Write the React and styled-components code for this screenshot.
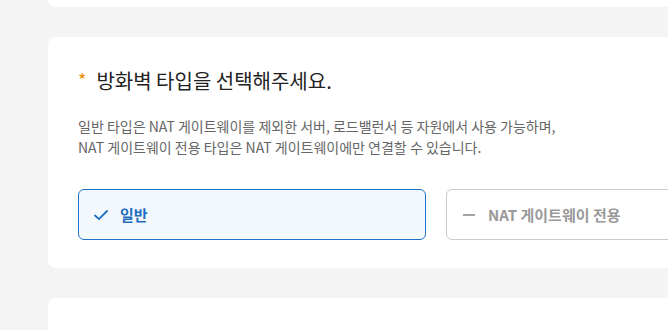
import styled, { createGlobalStyle } from "styled-components";

const GlobalStyle = createGlobalStyle`
  html, body {
    margin: 0;
    padding: 0;
    background: #f4f4f4;
    overflow: hidden;
  }
  body {
    font-family: "Noto Sans CJK KR", "Noto Sans", sans-serif;
  }
`;

const Page = styled.div`
  display: flex;
  flex-direction: column;
  gap: 30px;
  padding-left: 48px;
  margin-top: -40px;
  width: 900px;
`;

const Card = styled.section`
  background: #fff;
  border-radius: 8px;
  box-sizing: border-box;
  min-height: ${(p) => p.$height || "auto"};
  padding: ${(p) => (p.$empty ? "0" : "30px 30px 28px")};
`;

const TitleRow = styled.h2`
  display: flex;
  align-items: center;
  margin: 0;
  font-size: 20px;
  line-height: 28px;
  font-weight: 400;
  color: #222;
`;

const Required = styled.span`
  color: #f08c00;
  font-size: 18px;
  margin-right: 10px;
  position: relative;
  top: -2px;
`;

const Desc = styled.p`
  margin: 21px 0 0;
  font-size: 14px;
  line-height: 21px;
  color: #666;
`;

const Options = styled.div`
  display: flex;
  gap: 20px;
  margin-top: 31px;
`;

const Option = styled.button`
  display: flex;
  align-items: center;
  gap: 12px;
  width: 348px;
  height: 51px;
  box-sizing: border-box;
  padding: 0 15px;
  border-radius: 6px;
  font-family: inherit;
  font-size: 15px;
  font-weight: 700;
  cursor: pointer;
  border: 1px solid ${(p) => (p.$active ? "#1e74cc" : "#cccccc")};
  background: ${(p) => (p.$active ? "#f3f8fd" : "#fff")};
  color: ${(p) => (p.$active ? "#1e6fc2" : "#999")};
`;

const Icon = styled.svg`
  width: 14px;
  height: 14px;
  flex-shrink: 0;
`;

const CheckIcon = () => (
  <Icon viewBox="0 0 14 14" fill="none">
    <path d="M1 7.5 L5 11.2 L13 3" stroke="#1e6fc2" strokeWidth="1.8" strokeLinecap="round" strokeLinejoin="round" />
  </Icon>
);

const DashIcon = () => (
  <Icon viewBox="0 0 14 14" fill="none">
    <path d="M1 7 H13" stroke="#999" strokeWidth="1.8" />
  </Icon>
);

export default function App() {
  return (
    <>
      <GlobalStyle />
      <Page>
        <Card $empty $height="47px" />
        <Card>
          <TitleRow>
            <Required>*</Required>
            방화벽 타입을 선택해주세요.
          </TitleRow>
          <Desc>
            일반 타입은 NAT 게이트웨이를 제외한 서버, 로드밸런서 등 자원에서 사용 가능하며,
            <br />
            NAT 게이트웨이 전용 타입은 NAT 게이트웨이에만 연결할 수 있습니다.
          </Desc>
          <Options>
            <Option $active>
              <CheckIcon />
              일반
            </Option>
            <Option>
              <DashIcon />
              NAT 게이트웨이 전용
            </Option>
          </Options>
        </Card>
        <Card $empty $height="120px" />
      </Page>
    </>
  );
}
